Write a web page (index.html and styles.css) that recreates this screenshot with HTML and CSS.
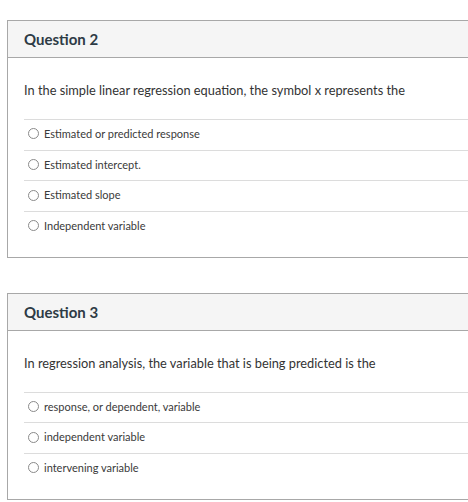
FILE: index.html
```html
<!DOCTYPE html>
<html>
<head>
<meta charset="utf-8">
<link rel="stylesheet" href="styles.css">
</head>
<body>
<div class="page">
  <div class="card">
    <div class="card-header"><h2 class="qtitle">Question 2</h2></div>
    <div class="card-body">
      <p class="qtext">In the simple linear regression equation, the symbol x represents the</p>
      <div class="answers">
        <label class="answer"><span class="radio"></span><span class="atext">Estimated or predicted response</span></label>
        <label class="answer"><span class="radio"></span><span class="atext">Estimated intercept.</span></label>
        <label class="answer"><span class="radio"></span><span class="atext">Estimated slope</span></label>
        <label class="answer"><span class="radio"></span><span class="atext">Independent variable</span></label>
      </div>
    </div>
  </div>
  <div class="card">
    <div class="card-header"><h2 class="qtitle">Question 3</h2></div>
    <div class="card-body">
      <p class="qtext">In regression analysis, the variable that is being predicted is the</p>
      <div class="answers">
        <label class="answer"><span class="radio"></span><span class="atext">response, or dependent, variable</span></label>
        <label class="answer"><span class="radio"></span><span class="atext">independent variable</span></label>
        <label class="answer"><span class="radio"></span><span class="atext">intervening variable</span></label>
      </div>
    </div>
  </div>
</div>
</body>
</html>
```
FILE: styles.css
```css
html, body {
  margin: 0;
  padding: 0;
  background: #ffffff;
}
body {
  font-family: Lato, "Open Sans", sans-serif;
  color: #2d3b45;
}
.page {
  box-sizing: border-box;
  width: 468px;
  height: 502px;
  overflow: hidden;
  padding: 20px 0 0 7px;
  display: flex;
  flex-direction: column;
  gap: 35px;
}
.card {
  border: 1px solid #a8a8a8;
  margin-right: -1px;
  background: #fff;
  flex: none;
}
.card-header {
  background: #f5f5f5;
  border-bottom: 1px solid #a8a8a8;
  height: 36px;
  display: flex;
  align-items: center;
  padding-left: 16px;
}
.qtitle {
  margin: 0;
  font-size: 15px;
  font-weight: 700;
  color: #2d3b45;
}
.card-body {
  padding: 0 0 15px 16px;
}
.qtext {
  margin: 0;
  padding: 23px 0 20px 0;
  font-size: 12.8px;
  line-height: 18px;
  color: #333;
}
.answers {
  display: flex;
  flex-direction: column;
}
.answer {
  display: flex;
  align-items: center;
  height: 29.7px;
  border-top: 1px solid #dcdcdc;
  font-size: 11px;
  color: #3a3a3a;
}
.radio {
  width: 9px;
  height: 9px;
  border: 1px solid #8a8a8a;
  border-radius: 50%;
  margin: -2px 5px 0 4px;
  background: #fff;
  flex: none;
}
.atext {
  line-height: 14px;
  margin-top: -2px;
}
```
